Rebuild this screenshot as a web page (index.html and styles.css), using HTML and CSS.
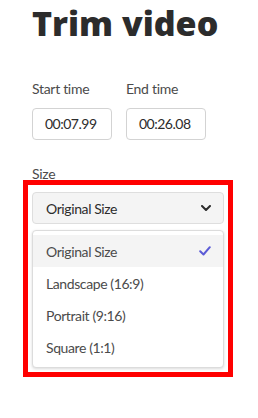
FILE: index.html
```html
<!DOCTYPE html>
<html>
<head>
<meta charset="utf-8">
<link rel="stylesheet" href="styles.css">
</head>
<body>
<div class="page">
  <h1 class="title">Trim video</h1>
  <div class="times">
    <div class="field">
      <div class="label">Start time</div>
      <div class="input">00:07.99</div>
    </div>
    <div class="field">
      <div class="label">End time</div>
      <div class="input">00:26.08</div>
    </div>
  </div>
  <div class="label size-label">Size</div>
  <div class="highlight">
    <div class="picker">
      <span>Original Size</span>
      <svg class="chevron" width="10" height="6" viewBox="0 0 10 6"><path d="M1 1 L5 5 L9 1" fill="none" stroke="#2c2c2c" stroke-width="2" stroke-linecap="round" stroke-linejoin="round"/></svg>
    </div>
    <div class="menu">
      <div class="item selected"><span>Original Size</span>
        <svg width="12" height="10" viewBox="0 0 12 10"><path d="M1.2 5.2 L4.5 8.5 L10.8 1.2" fill="none" stroke="#5b5bd6" stroke-width="2" stroke-linecap="round" stroke-linejoin="round"/></svg>
      </div>
      <div class="item"><span>Landscape (16:9)</span></div>
      <div class="item"><span>Portrait (9:16)</span></div>
      <div class="item"><span>Square (1:1)</span></div>
    </div>
  </div>
</div>
</body>
</html>
```
FILE: styles.css
```css
* { box-sizing: border-box; }
html, body { margin: 0; padding: 0; background: #fff; }
body { font-family: Lato, "Open Sans", sans-serif; color: #4b4b4b; }
.page { padding: 3px 0 0 32px; }
.title {
  margin: 0;
  font-family: "Open Sans", Lato, sans-serif;
  font-size: 34px;
  line-height: 40px;
  font-weight: 800;
  color: #2c2c2c;
  letter-spacing: 0;
}
.times { display: flex; gap: 14px; margin-top: 37px; }
.field { display: flex; flex-direction: column; gap: 10px; }
.label { font-size: 14px; line-height: 18px; color: #4b4b4b; letter-spacing: -0.3px; }
.input {
  width: 80px;
  height: 32px;
  border: 1px solid #d3d3d3;
  border-radius: 4px;
  padding-left: 12px;
  font-size: 14px;
  line-height: 30px;
  color: #2c2c2c;
  letter-spacing: -0.5px;
}
.size-label { margin-top: 26px; line-height: 16px; margin-bottom: -2px; }
.highlight {
  margin-left: -9px;
  width: 210px;
  border: 5px solid #ff0000;
  padding: 7px 4px 4px 4px;
  display: flex;
  flex-direction: column;
  gap: 6px;
}
.picker {
  height: 32px;
  background: #f4f4f4;
  border: 1px solid #dedede;
  border-radius: 4px;
  padding: 0 12px 0 13px;
  display: flex;
  align-items: center;
  justify-content: space-between;
  font-size: 14px;
  color: #2c2c2c;
  letter-spacing: -0.4px;
}
.menu {
  background: #fff;
  border: 1px solid #dcdcdc;
  border-radius: 4px;
  padding: 4px 0;
  box-shadow: 0 1px 3px rgba(0,0,0,0.15);
}
.item {
  height: 32px;
  padding: 0 12px 0 13px;
  display: flex;
  align-items: center;
  justify-content: space-between;
  font-size: 14px;
  color: #4b4b4b;
  letter-spacing: -0.4px;
}
.item.selected { background: #f4f4f4; }
```
